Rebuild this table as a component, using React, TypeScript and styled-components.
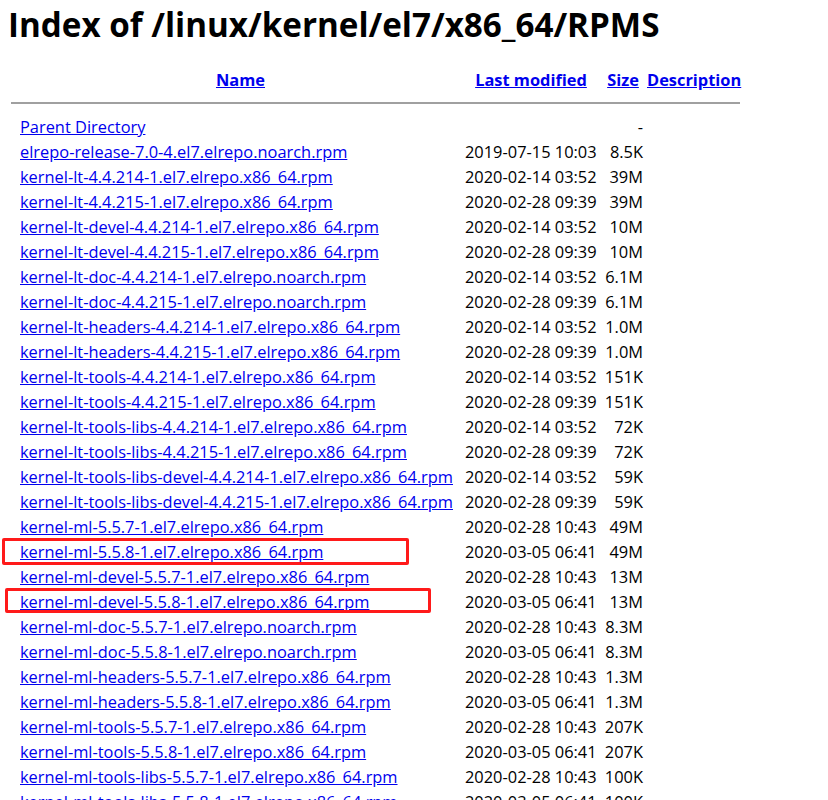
import React from "react";
import styled, { createGlobalStyle } from "styled-components";

const GlobalStyle = createGlobalStyle`
  html, body { margin: 0; padding: 0; background: #ffffff; }
  body { font-family: "Open Sans", "Noto Sans", "Noto Sans CJK SC", sans-serif; color: #000; }
`;

const Page = styled.div`
  padding: 0 8px;
`;

const Title = styled.h1`
  margin: 0;
  padding-top: 3px;
  font-size: 33.2px;
  line-height: 44px;
  font-weight: 700;
  color: #000;
  white-space: nowrap;
`;

const Listing = styled.div`
  margin-top: 20px;
  width: 734px;
`;

const Row = styled.div`
  position: relative;
  display: grid;
  grid-template-columns: 12px 441px 140px 44px 97px;
  height: 25px;
  align-items: center;
  font-size: 16.4px;
  line-height: 25px;
  white-space: nowrap;
`;

const Mark = styled.span<{ $left: number; $right: number; $top: number; $bottom: number }>`
  position: absolute;
  left: ${(p) => p.$left}px;
  width: ${(p) => p.$right - p.$left}px;
  top: ${(p) => p.$top}px;
  height: ${(p) => p.$bottom - p.$top}px;
  box-sizing: border-box;
  border: 3px solid #ff1a1a;
  border-radius: 2px;
  pointer-events: none;
`;

const Cell = styled.div<{ $align?: "left" | "center" | "right" }>`
  padding: 0 2px;
  text-align: ${(p) => p.$align || "left"};
`;

const DateCell = styled.div`
  padding: 0 0 0 4px;
  text-align: left;
`;

const NameCell = styled.div<{ $align?: "left" | "center" }>`
  text-align: ${(p) => p.$align || "left"};
`;

const Link = styled.a<{ $bold?: boolean }>`
  color: #0000ee;
  text-decoration: underline;
  font-weight: ${(p) => (p.$bold ? 700 : 400)};
`;

const Rule = styled.hr`
  margin: 0 0 0 3px;
  width: 729px;
  border: 0;
  border-top: 2px solid #a0a0a0;
  height: 0;
`;

const RuleRow = styled.div`
  height: 22px;
  display: flex;
  align-items: center;
`;

type Entry = [string, string, string];

const entries: Entry[] = [
  ["elrepo-release-7.0-4.el7.elrepo.noarch.rpm", "2019-07-15 10:03", "8.5K"],
  ["kernel-lt-4.4.214-1.el7.elrepo.x86_64.rpm", "2020-02-14 03:52", "39M"],
  ["kernel-lt-4.4.215-1.el7.elrepo.x86_64.rpm", "2020-02-28 09:39", "39M"],
  ["kernel-lt-devel-4.4.214-1.el7.elrepo.x86_64.rpm", "2020-02-14 03:52", "10M"],
  ["kernel-lt-devel-4.4.215-1.el7.elrepo.x86_64.rpm", "2020-02-28 09:39", "10M"],
  ["kernel-lt-doc-4.4.214-1.el7.elrepo.noarch.rpm", "2020-02-14 03:52", "6.1M"],
  ["kernel-lt-doc-4.4.215-1.el7.elrepo.noarch.rpm", "2020-02-28 09:39", "6.1M"],
  ["kernel-lt-headers-4.4.214-1.el7.elrepo.x86_64.rpm", "2020-02-14 03:52", "1.0M"],
  ["kernel-lt-headers-4.4.215-1.el7.elrepo.x86_64.rpm", "2020-02-28 09:39", "1.0M"],
  ["kernel-lt-tools-4.4.214-1.el7.elrepo.x86_64.rpm", "2020-02-14 03:52", "151K"],
  ["kernel-lt-tools-4.4.215-1.el7.elrepo.x86_64.rpm", "2020-02-28 09:39", "151K"],
  ["kernel-lt-tools-libs-4.4.214-1.el7.elrepo.x86_64.rpm", "2020-02-14 03:52", "72K"],
  ["kernel-lt-tools-libs-4.4.215-1.el7.elrepo.x86_64.rpm", "2020-02-28 09:39", "72K"],
  ["kernel-lt-tools-libs-devel-4.4.214-1.el7.elrepo.x86_64.rpm", "2020-02-14 03:52", "59K"],
  ["kernel-lt-tools-libs-devel-4.4.215-1.el7.elrepo.x86_64.rpm", "2020-02-28 09:39", "59K"],
  ["kernel-ml-5.5.7-1.el7.elrepo.x86_64.rpm", "2020-02-28 10:43", "49M"],
  ["kernel-ml-5.5.8-1.el7.elrepo.x86_64.rpm", "2020-03-05 06:41", "49M"],
  ["kernel-ml-devel-5.5.7-1.el7.elrepo.x86_64.rpm", "2020-02-28 10:43", "13M"],
  ["kernel-ml-devel-5.5.8-1.el7.elrepo.x86_64.rpm", "2020-03-05 06:41", "13M"],
  ["kernel-ml-doc-5.5.7-1.el7.elrepo.noarch.rpm", "2020-02-28 10:43", "8.3M"],
  ["kernel-ml-doc-5.5.8-1.el7.elrepo.noarch.rpm", "2020-03-05 06:41", "8.3M"],
  ["kernel-ml-headers-5.5.7-1.el7.elrepo.x86_64.rpm", "2020-02-28 10:43", "1.3M"],
  ["kernel-ml-headers-5.5.8-1.el7.elrepo.x86_64.rpm", "2020-03-05 06:41", "1.3M"],
  ["kernel-ml-tools-5.5.7-1.el7.elrepo.x86_64.rpm", "2020-02-28 10:43", "207K"],
  ["kernel-ml-tools-5.5.8-1.el7.elrepo.x86_64.rpm", "2020-03-05 06:41", "207K"],
  ["kernel-ml-tools-libs-5.5.7-1.el7.elrepo.x86_64.rpm", "2020-02-28 10:43", "100K"],
  ["kernel-ml-tools-libs-5.5.8-1.el7.elrepo.x86_64.rpm", "2020-03-05 06:41", "100K"],
];

const marks: Record<string, { left: number; right: number; top: number; bottom: number }> = {
  "kernel-ml-5.5.8-1.el7.elrepo.x86_64.rpm": { left: -6, right: 401, top: -1, bottom: 26 },
  "kernel-ml-devel-5.5.8-1.el7.elrepo.x86_64.rpm": { left: -3, right: 423, top: -1, bottom: 24 },
};

export default function App() {
  return (
    <Page>
      <GlobalStyle />
      <Title>Index of /linux/kernel/el7/x86_64/RPMS</Title>
      <Listing>
        <Row>
          <Cell />
          <NameCell $align="center">
            <Link href="#" $bold>Name</Link>
          </NameCell>
          <Cell $align="center">
            <Link href="#" $bold>Last modified</Link>
          </Cell>
          <Cell $align="center">
            <Link href="#" $bold>Size</Link>
          </Cell>
          <Cell $align="center">
            <Link href="#" $bold>Description</Link>
          </Cell>
        </Row>
        <RuleRow>
          <Rule />
        </RuleRow>
        <Row>
          <Cell />
          <NameCell>
            <Link href="#">Parent Directory</Link>
          </NameCell>
          <Cell />
          <Cell $align="right">-</Cell>
          <Cell />
        </Row>
        {entries.map(([name, date, size]) => {
          const m = marks[name];
          return (
            <Row key={name}>
              {m && <Mark $left={m.left} $right={m.right} $top={m.top} $bottom={m.bottom} />}
              <Cell />
              <NameCell>
                <Link href="#">{name}</Link>
              </NameCell>
              <DateCell>{date}</DateCell>
              <Cell $align="right">{size}</Cell>
              <Cell />
            </Row>
          );
        })}
      </Listing>
    </Page>
  );
}
